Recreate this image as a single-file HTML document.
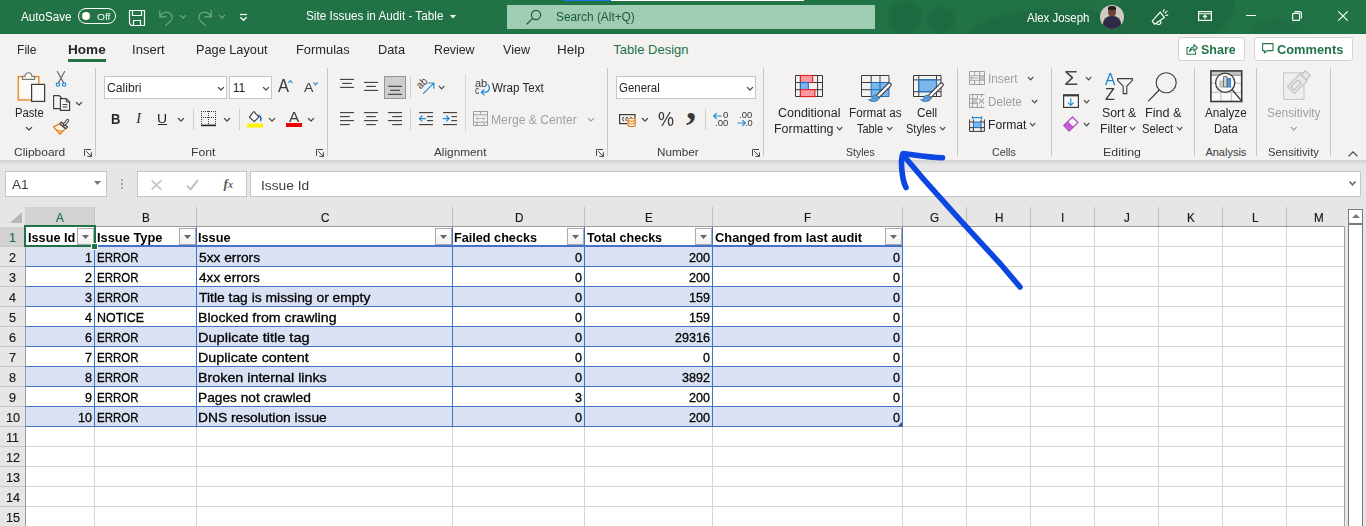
<!DOCTYPE html>
<html lang="en"><head><meta charset="utf-8"><title>Site Issues in Audit - Table - Excel</title>
<style>
html,body{margin:0;padding:0}
body{width:1366px;height:526px;overflow:hidden;position:relative;background:#e6e6e6;font-family:"Liberation Sans",sans-serif}
.b{position:absolute;box-sizing:border-box;display:block}
.t{position:absolute;white-space:nowrap;transform-origin:0 0;line-height:1;display:block}
svg{overflow:visible}
</style></head>
<body>
<div class="b" style="left:0px;top:0px;width:1366px;height:34px;background:#217346;overflow:hidden"><div class="b" style="left:888px;top:1px;width:34px;height:34px;border-radius:50%;background:#1e6a40;filter:blur(1.5px)"></div><div class="b" style="left:927px;top:6px;width:28px;height:28px;border-radius:50%;background:#1e6a40;filter:blur(1.5px)"></div><div class="b" style="left:965px;top:9px;width:190px;height:64px;border-radius:50%;background:#1e6a40;filter:blur(1.5px)"></div><div class="b" style="left:1120px;top:-20px;width:115px;height:60px;border-radius:0 0 40px 20px;background:#1e6a40;filter:blur(1.5px)"></div><div class="b" style="left:1040px;top:-30px;width:60px;height:44px;border-radius:50%;background:#206f43;filter:blur(2px)"></div><div class="b" style="left:1250px;top:18px;width:50px;height:40px;border-radius:50%;background:#1f6d42;filter:blur(2px)"></div></div>
<div class="b" style="left:563px;top:0px;width:48px;height:1px;background:#1a73e8"></div>
<div class="b" style="left:611px;top:0px;width:193px;height:1px;background:#fff"></div>
<span class="t" style="left:21.00px;top:10.82px;font-size:12.5px;color:#fff;transform:scaleX(0.9313);">AutoSave</span>
<div class="b" style="left:78px;top:8px;width:38px;height:16.4px;border:1px solid #fff;border-radius:9px"></div>
<div class="b" style="left:81.7px;top:12px;width:8.2px;height:8.2px;background:#fff;border-radius:50%"></div>
<span class="t" style="left:96.73px;top:11.86px;font-size:9.5px;color:#fff;transform:scaleX(1.0722);">Off</span>
<span class="t" style="left:306.47px;top:10.32px;font-size:12.5px;color:#fff;transform:scaleX(0.9387);">Site Issues in Audit - Table</span>
<svg class="b" style="left:450px;top:15px;" width="6" height="4" viewBox="0 0 6 4"><path d="M0 0h6l-3 3.5z" fill="#fff"/></svg>
<div class="b" style="left:507px;top:5px;width:368px;height:24px;background:#9fcdb3"></div>
<span class="t" style="left:556.47px;top:10.82px;font-size:12.5px;color:#1c5a38;transform:scaleX(0.9492);">Search (Alt+Q)</span>
<span class="t" style="left:1027.00px;top:11.62px;font-size:12.5px;color:#fff;transform:scaleX(0.9166);">Alex Joseph</span>
<div class="b" style="left:0px;top:34px;width:1366px;height:126px;background:#f3f2f1"></div>
<div class="b" style="left:0px;top:160px;width:1366px;height:5px;background:linear-gradient(#d2d2d2,#e6e6e6)"></div>
<span class="t" style="left:16.61px;top:43.40px;font-size:13px;color:#262626;transform:scaleX(0.9290);">File</span>
<span class="t" style="left:67.75px;top:43.40px;font-size:13px;color:#262626;font-weight:700;transform:scaleX(1.0437);">Home</span>
<div class="b" style="left:68px;top:58.5px;width:38px;height:3px;background:#217346"></div>
<span class="t" style="left:132.41px;top:43.40px;font-size:13px;color:#262626;transform:scaleX(1.0048);">Insert</span>
<span class="t" style="left:195.56px;top:43.40px;font-size:13px;color:#262626;transform:scaleX(0.9795);">Page Layout</span>
<span class="t" style="left:296.35px;top:43.40px;font-size:13px;color:#262626;transform:scaleX(0.9907);">Formulas</span>
<span class="t" style="left:378.36px;top:43.40px;font-size:13px;color:#262626;transform:scaleX(0.9835);">Data</span>
<span class="t" style="left:434.39px;top:43.40px;font-size:13px;color:#262626;transform:scaleX(0.9514);">Review</span>
<span class="t" style="left:503.00px;top:43.40px;font-size:13px;color:#262626;transform:scaleX(0.9643);">View</span>
<span class="t" style="left:557.30px;top:43.40px;font-size:13px;color:#262626;transform:scaleX(1.0348);">Help</span>
<span class="t" style="left:613.35px;top:43.40px;font-size:13px;color:#217346;">Table Design</span>
<div class="b" style="left:1178px;top:37px;width:67px;height:24px;background:#fff;border:1px solid #d6d4d2;border-radius:3px"></div>
<span class="t" style="left:1201.24px;top:43.40px;font-size:13px;color:#217346;font-weight:700;transform:scaleX(0.9628);">Share</span>
<div class="b" style="left:1254px;top:37px;width:99px;height:24px;background:#fff;border:1px solid #d6d4d2;border-radius:3px"></div>
<span class="t" style="left:1277.11px;top:43.40px;font-size:13px;color:#217346;font-weight:700;transform:scaleX(0.9881);">Comments</span>
<div class="b" style="left:95px;top:68px;width:1px;height:88px;background:#c8c6c4"></div>
<div class="b" style="left:327px;top:68px;width:1px;height:88px;background:#c8c6c4"></div>
<div class="b" style="left:607px;top:68px;width:1px;height:88px;background:#c8c6c4"></div>
<div class="b" style="left:763px;top:68px;width:1px;height:88px;background:#c8c6c4"></div>
<div class="b" style="left:957px;top:68px;width:1px;height:88px;background:#c8c6c4"></div>
<div class="b" style="left:1051px;top:68px;width:1px;height:88px;background:#c8c6c4"></div>
<div class="b" style="left:1194px;top:68px;width:1px;height:88px;background:#c8c6c4"></div>
<div class="b" style="left:1256px;top:68px;width:1px;height:88px;background:#c8c6c4"></div>
<div class="b" style="left:1330px;top:68px;width:1px;height:88px;background:#c8c6c4"></div>
<div class="b" style="left:465px;top:74px;width:1px;height:58px;background:#d8d6d4"></div>
<div class="b" style="left:410px;top:77px;width:1px;height:21px;background:#d0cecc"></div>
<div class="b" style="left:410px;top:109px;width:1px;height:21px;background:#d0cecc"></div>
<div class="b" style="left:193px;top:109px;width:1px;height:21px;background:#d0cecc"></div>
<div class="b" style="left:239px;top:109px;width:1px;height:21px;background:#d0cecc"></div>
<div class="b" style="left:705px;top:109px;width:1px;height:21px;background:#d0cecc"></div>
<span class="t" style="left:13.86px;top:147.09px;font-size:11px;color:#3b3a39;transform:scaleX(1.0884);">Clipboard</span>
<span class="t" style="left:190.63px;top:147.09px;font-size:11px;color:#3b3a39;transform:scaleX(1.1110);">Font</span>
<span class="t" style="left:433.60px;top:147.09px;font-size:11px;color:#3b3a39;transform:scaleX(1.0721);">Alignment</span>
<span class="t" style="left:656.67px;top:147.09px;font-size:11px;color:#3b3a39;transform:scaleX(1.0614);">Number</span>
<span class="t" style="left:846.12px;top:147.09px;font-size:11px;color:#3b3a39;transform:scaleX(0.9566);">Styles</span>
<span class="t" style="left:992.11px;top:147.09px;font-size:11px;color:#3b3a39;transform:scaleX(0.9761);">Cells</span>
<span class="t" style="left:1103.41px;top:147.09px;font-size:11px;color:#3b3a39;transform:scaleX(1.1290);">Editing</span>
<span class="t" style="left:1205.40px;top:147.09px;font-size:11px;color:#3b3a39;">Analysis</span>
<span class="t" style="left:1268.09px;top:147.09px;font-size:11px;color:#3b3a39;transform:scaleX(1.0286);">Sensitivity</span>
<span class="t" style="left:14.72px;top:106.84px;font-size:12px;color:#262626;transform:scaleX(0.9368);">Paste</span>
<div class="b" style="left:104px;top:76px;width:123px;height:23px;background:#fff;border:1px solid #c8c6c4"></div>
<span class="t" style="left:107.43px;top:82.24px;font-size:12px;color:#262626;transform:scaleX(1.0115);">Calibri</span>
<div class="b" style="left:229px;top:76px;width:43px;height:23px;background:#fff;border:1px solid #c8c6c4"></div>
<span class="t" style="left:232.72px;top:82.24px;font-size:12px;color:#262626;">11</span>
<span class="t" style="left:110.79px;top:111.55px;font-size:14px;color:#262626;font-weight:700;transform:scaleX(0.9275);">B</span>
<span class="t" style="left:136.2px;top:111.6px;font-size:14px;font-style:italic;color:#262626;font-family:'Liberation Serif',serif">I</span>
<span class="t" style="left:157.42px;top:111.90px;font-size:13px;color:#262626;transform:scaleX(1.0756);">U</span>
<div class="b" style="left:158px;top:124px;width:9px;height:1px;background:#262626"></div>
<span class="t" style="left:492.40px;top:82.24px;font-size:12px;color:#262626;transform:scaleX(0.9645);">Wrap Text</span>
<span class="t" style="left:491.45px;top:114.24px;font-size:12px;color:#a19f9d;transform:scaleX(1.0124);">Merge &amp; Center</span>
<div class="b" style="left:616px;top:76px;width:140px;height:23px;background:#fff;border:1px solid #c8c6c4"></div>
<span class="t" style="left:619.06px;top:82.24px;font-size:12px;color:#262626;transform:scaleX(0.9537);">General</span>
<span class="t" style="left:657.96px;top:109.89px;font-size:19.5px;color:#3b3a39;transform:scaleX(0.9250);">%</span>
<span class="t" style="left:778.02px;top:107.24px;font-size:12px;color:#262626;transform:scaleX(1.0394);">Conditional</span>
<span class="t" style="left:773.63px;top:123.24px;font-size:12px;color:#262626;transform:scaleX(1.0379);">Formatting</span>
<span class="t" style="left:848.69px;top:107.24px;font-size:12px;color:#262626;transform:scaleX(0.9756);">Format as</span>
<span class="t" style="left:857.37px;top:123.24px;font-size:12px;color:#262626;transform:scaleX(0.9092);">Table</span>
<span class="t" style="left:917.05px;top:107.24px;font-size:12px;color:#262626;transform:scaleX(0.9735);">Cell</span>
<span class="t" style="left:905.94px;top:123.24px;font-size:12px;color:#262626;transform:scaleX(0.9179);">Styles</span>
<span class="t" style="left:987.55px;top:73.24px;font-size:12px;color:#a19f9d;transform:scaleX(0.9835);">Insert</span>
<span class="t" style="left:987.69px;top:96.24px;font-size:12px;color:#a19f9d;transform:scaleX(0.9744);">Delete</span>
<span class="t" style="left:987.65px;top:119.24px;font-size:12px;color:#262626;transform:scaleX(1.0108);">Format</span>
<span class="t" style="left:1101.89px;top:107.24px;font-size:12px;color:#262626;transform:scaleX(1.0279);">Sort &amp;</span>
<span class="t" style="left:1099.65px;top:123.24px;font-size:12px;color:#262626;transform:scaleX(1.0093);">Filter</span>
<span class="t" style="left:1144.61px;top:107.24px;font-size:12px;color:#262626;transform:scaleX(1.0528);">Find &amp;</span>
<span class="t" style="left:1141.93px;top:123.24px;font-size:12px;color:#262626;transform:scaleX(0.9344);">Select</span>
<span class="t" style="left:1205.40px;top:107.24px;font-size:12px;color:#262626;transform:scaleX(0.9766);">Analyze</span>
<span class="t" style="left:1213.73px;top:123.24px;font-size:12px;color:#262626;transform:scaleX(0.9330);">Data</span>
<span class="t" style="left:1266.50px;top:107.24px;font-size:12px;color:#a19f9d;transform:scaleX(0.9907);">Sensitivity</span>
<div class="b" style="left:384px;top:76px;width:22px;height:23px;background:#d0cecc;border:1px solid #979593"></div>
<div class="b" style="left:5px;top:171px;width:102px;height:26px;background:#fff;border:1px solid #c6c6c6"></div>
<span class="t" style="left:12.10px;top:178.26px;font-size:13.4px;color:#3c3c3c;transform:scaleX(1.0095);">A1</span>
<div class="b" style="left:137px;top:171px;width:110px;height:26px;background:#fff;border:1px solid #c6c6c6"></div>
<div class="b" style="left:250px;top:171px;width:1111px;height:26px;background:#fff;border:1px solid #c6c6c6"></div>
<span class="t" style="left:261.24px;top:178.50px;font-size:13px;color:#3c3c3c;transform:scaleX(1.0582);">Issue Id</span>
<svg class="b" style="left:129px;top:10px;" width="16" height="16" viewBox="0 0 16 16"><path d="M0.5 0.5H15.5V15.5H2.5L0.5 13.5Z M3.5 0.5V5.5H12.5V0.5 M4.5 15.5V10.5H11.5V15.5" fill="none" stroke="#fff" stroke-width="1.2" stroke-linejoin="round"/></svg>
<svg class="b" style="left:159px;top:10px;" width="14" height="16" viewBox="0 0 14 16"><path d="M0.8 0.5V6.8H7 M1.2 6.4C3 2.8 7 1.2 10.2 2.8C13.6 4.6 14 8.6 11.4 11.2L6.5 15.6" fill="none" stroke="#6ea687" stroke-width="1.2" stroke-linecap="round" stroke-linejoin="round"/></svg>
<svg class="b" style="left:180px;top:15px;" width="6" height="4" viewBox="0 0 6 4"><path d="M0.3 0.3 L3.0 3 L5.7 0.3" fill="none" stroke="#6ea687" stroke-width="1.2" stroke-linecap="round" stroke-linejoin="round"/></svg>
<svg class="b" style="left:198px;top:10px;" width="14" height="16" viewBox="0 0 14 16"><path d="M13.2 0.5V6.8H7 M12.8 6.4C11 2.8 7 1.2 3.8 2.8C0.4 4.6 0 8.6 2.6 11.2L7.5 15.6" fill="none" stroke="#6ea687" stroke-width="1.2" stroke-linecap="round" stroke-linejoin="round"/></svg>
<svg class="b" style="left:219px;top:15px;" width="6" height="4" viewBox="0 0 6 4"><path d="M0.3 0.3 L3.0 3 L5.7 0.3" fill="none" stroke="#6ea687" stroke-width="1.2" stroke-linecap="round" stroke-linejoin="round"/></svg>
<svg class="b" style="left:240px;top:13.5px;" width="7" height="7" viewBox="0 0 7 7"><path d="M0 0.5H7" stroke="#fff" stroke-width="1.2"/><path d="M0.4 3.3L3.5 6.3L6.6 3.3" fill="none" stroke="#fff" stroke-width="1.3"/></svg>
<svg class="b" style="left:525.5px;top:9px;" width="16" height="16" viewBox="0 0 16 16"><circle cx="10" cy="6" r="4.6" fill="none" stroke="#1c5a38" stroke-width="1.2"/><path d="M6.6 9.4L1 15" stroke="#1c5a38" stroke-width="1.2" stroke-linecap="round"/></svg>
<div class="b" style="left:1100px;top:4.5px;width:24px;height:24px;border-radius:50%;overflow:hidden;background:#cfcac2"><div class="b" style="left:7.5px;top:2px;width:8px;height:10px;border-radius:50%;background:#6b4636"></div><div class="b" style="left:7.5px;top:1px;width:8px;height:4px;border-radius:50% 50% 0 0;background:#221c1a"></div><div class="b" style="left:2.5px;top:11px;width:18px;height:18px;border-radius:45% 45% 0 0;background:#2c2a45"></div></div>
<svg class="b" style="left:1151px;top:8.5px;" width="17" height="17" viewBox="0 0 17 17"><path d="M9.2 3.2L13.4 8.6L3.6 15.2L1.2 12.2Z" fill="none" stroke="#fff" stroke-width="1.2" stroke-linejoin="round"/><path d="M5.5 14.2A2.2 2.2 0 0 0 9.6 12" fill="none" stroke="#fff" stroke-width="1.1"/><path d="M12.2 2.6L13 0.6M14 4L16 2.2M14.8 6.4L16.8 6" stroke="#fff" stroke-width="1.1" stroke-linecap="round"/></svg>
<svg class="b" style="left:1197.5px;top:11px;" width="14" height="10" viewBox="0 0 14 10"><rect x="0.6" y="0.6" width="12.8" height="8.8" fill="none" stroke="#fff" stroke-width="1.2"/><path d="M0.6 2.8H13.4" stroke="#fff" stroke-width="1"/><path d="M7 8V4.4M5 6.2L7 4.2L9 6.2" fill="none" stroke="#fff" stroke-width="1.1"/></svg>
<div class="b" style="left:1246px;top:14.6px;width:10px;height:1.2px;background:#fff"></div>
<svg class="b" style="left:1292px;top:11px;" width="10" height="10" viewBox="0 0 10 10"><rect x="0.6" y="2.4" width="7" height="7" rx="1" fill="none" stroke="#fff" stroke-width="1.1"/><path d="M2.6 0.6H7.4A2 2 0 0 1 9.4 2.6V7.4" fill="none" stroke="#fff" stroke-width="1.1"/></svg>
<svg class="b" style="left:1338px;top:11px;" width="10" height="10" viewBox="0 0 10 10"><path d="M0.3 0.3L9.7 9.7M9.7 0.3L0.3 9.7" stroke="#fff" stroke-width="1.2"/></svg>
<svg class="b" style="left:1185.5px;top:43px;" width="12" height="12" viewBox="0 0 12 12"><path d="M3 4.5H1V11.2H9.6V8.4" fill="none" stroke="#217346" stroke-width="1.1" stroke-linejoin="round"/><path d="M3.6 8.6C4 5.6 6 4 8 4V1.6L11.4 4.8L8 8V5.8C6.4 5.8 4.8 6.6 3.6 8.6Z" fill="none" stroke="#217346" stroke-width="1.1" stroke-linejoin="round"/></svg>
<svg class="b" style="left:1262px;top:43px;" width="12" height="11" viewBox="0 0 12 11"><path d="M0.6 0.6H11V7.6H5L2.4 10V7.6H0.6Z" fill="none" stroke="#217346" stroke-width="1.1" stroke-linejoin="round"/></svg>
<svg class="b" style="left:17px;top:71px;" width="30" height="32" viewBox="0 0 30 32"><rect x="1.2" y="5.6" width="20.6" height="23.4" fill="#fdf3d6" stroke="#e07c1a" stroke-width="1.2"/><rect x="3.4" y="7.6" width="16.4" height="19.6" fill="#fbfaf8"/><path d="M5.4 8.4V5.4H8.2C8.2 0.6 14.8 0.6 14.8 5.4H17.6V8.4Z" fill="#f8f7f5" stroke="#797775" stroke-width="1.1" stroke-linejoin="round"/><rect x="14.6" y="13.4" width="13" height="17" fill="#fafafa" stroke="#3b3a39" stroke-width="1.2"/></svg>
<svg class="b" style="left:25.7px;top:127px;" width="6" height="4" viewBox="0 0 6 4"><path d="M0.3 0.3 L3.0 3 L5.7 0.3" fill="none" stroke="#444" stroke-width="1.2" stroke-linecap="round" stroke-linejoin="round"/></svg>
<svg class="b" style="left:55px;top:71px;" width="12" height="16" viewBox="0 0 12 16"><path d="M2.4 0.6L8.4 11.4M9.6 0.6L3.6 11.4" stroke="#605e5c" stroke-width="1.1" stroke-linecap="round"/><circle cx="2.9" cy="13.6" r="1.7" fill="none" stroke="#1e8ad6" stroke-width="1.1"/><circle cx="9.1" cy="13.6" r="1.7" fill="none" stroke="#1e8ad6" stroke-width="1.1"/></svg>
<svg class="b" style="left:52.5px;top:95px;" width="18" height="16" viewBox="0 0 18 16"><path d="M7.4 13.6H0.6V0.6H6.2L8.6 3" fill="none" stroke="#3b3a39" stroke-width="1.1" stroke-linejoin="round"/><path d="M7.4 3.6H13.4L16.6 6.8V15.4H7.4Z" fill="#fafafa" stroke="#3b3a39" stroke-width="1.1" stroke-linejoin="round"/><path d="M13.2 3.8V7H16.4" fill="none" stroke="#3b3a39" stroke-width="1"/><path d="M9.6 9.6H14.4M9.6 12H14.4" stroke="#3b3a39" stroke-width="1"/></svg>
<svg class="b" style="left:76px;top:102.2px;" width="6" height="4" viewBox="0 0 6 4"><path d="M0.3 0.3 L3.0 3 L5.7 0.3" fill="none" stroke="#444" stroke-width="1.2" stroke-linecap="round" stroke-linejoin="round"/></svg>
<svg class="b" style="left:53px;top:118.5px;" width="17" height="16" viewBox="0 0 17 16"><path d="M6.6 4.9L0.5 7.9L7 15.3L12.3 9.7Z" fill="#fdf6ec" stroke="#e07c1a" stroke-width="1.2" stroke-linejoin="round"/><path d="M2.4 9.8L7 15L10.6 11.4C7.6 12.4 5 11.6 2.4 9.8Z" fill="#f7b55c" stroke="#e07c1a" stroke-width="0.6"/><path d="M8.3 3L14.5 8L13 9.7L6.9 4.7Z" fill="#f3f2f1" stroke="#3b3a39" stroke-width="1.1" stroke-linejoin="round"/><path d="M11.4 5.4L14.6 1.5" stroke="#3b3a39" stroke-width="3.2" stroke-linecap="round"/><path d="M11.6 5.2L14.6 1.5" stroke="#f3f2f1" stroke-width="1.2" stroke-linecap="round"/></svg>
<svg class="b" style="left:84px;top:148.5px;" width="8" height="8" viewBox="0 0 8 8"><path d="M0.5 6.8V0.5H7M2.2 2.2L7.3 7.3M7.4 3.4V7.4H3.4" fill="none" stroke="#484644" stroke-width="1"/></svg>
<svg class="b" style="left:217.6px;top:86.8px;" width="6" height="4" viewBox="0 0 6 4"><path d="M0.3 0.3 L3.0 3 L5.7 0.3" fill="none" stroke="#444" stroke-width="1.2" stroke-linecap="round" stroke-linejoin="round"/></svg>
<svg class="b" style="left:262.6px;top:86.8px;" width="6" height="4" viewBox="0 0 6 4"><path d="M0.3 0.3 L3.0 3 L5.7 0.3" fill="none" stroke="#444" stroke-width="1.2" stroke-linecap="round" stroke-linejoin="round"/></svg>
<span class="t" style="left:278.00px;top:77.16px;font-size:18px;color:#3b3a39;transform:scaleX(0.9167);">A</span>
<svg class="b" style="left:288.4px;top:79.6px;" width="5" height="3.4" viewBox="0 0 5 3.4"><path d="M0.4 3L2.5 0.6L4.6 3" fill="none" stroke="#1e8ad6" stroke-width="1.1"/></svg>
<span class="t" style="left:303.60px;top:80.97px;font-size:13.5px;color:#3b3a39;transform:scaleX(1.0444);">A</span>
<svg class="b" style="left:312.8px;top:81.6px;" width="5" height="3.4" viewBox="0 0 5 3.4"><path d="M0.4 0.4L2.5 2.8L4.6 0.4" fill="none" stroke="#1e8ad6" stroke-width="1.1"/></svg>
<svg class="b" style="left:177.5px;top:118px;" width="6" height="4" viewBox="0 0 6 4"><path d="M0.3 0.3 L3.0 3 L5.7 0.3" fill="none" stroke="#444" stroke-width="1.2" stroke-linecap="round" stroke-linejoin="round"/></svg>
<svg class="b" style="left:201px;top:111px;" width="15" height="15.5" viewBox="0 0 15 15.5"><path d="M0 0.5H15M0 6.5H15M0.5 0V13M14.5 0V13M7.5 0V13" fill="none" stroke="#3b3a39" stroke-width="1" stroke-dasharray="1 1"/><path d="M0 14.4H15" stroke="#201f1e" stroke-width="1.6"/></svg>
<svg class="b" style="left:223.5px;top:118px;" width="6" height="4" viewBox="0 0 6 4"><path d="M0.3 0.3 L3.0 3 L5.7 0.3" fill="none" stroke="#444" stroke-width="1.2" stroke-linecap="round" stroke-linejoin="round"/></svg>
<svg class="b" style="left:247px;top:110.5px;" width="16" height="16.5" viewBox="0 0 16 16.5"><path d="M6.2 1.2L2.4 6.2L7.2 10.6L12 5.8L7.4 1.4" fill="#fafafa" stroke="#3b3a39" stroke-width="1.1" stroke-linejoin="round"/><path d="M6.4 0.6C7.4 0 8.4 0.8 7.8 2" fill="none" stroke="#3b3a39" stroke-width="1"/><path d="M12 4.4C13.6 5.4 14.4 7.4 13.6 9.6" fill="none" stroke="#1565c0" stroke-width="1.5" stroke-linecap="round"/><rect x="0" y="12.6" width="16" height="3.9" fill="#fff100"/></svg>
<svg class="b" style="left:269.4px;top:118px;" width="6" height="4" viewBox="0 0 6 4"><path d="M0.3 0.3 L3.0 3 L5.7 0.3" fill="none" stroke="#444" stroke-width="1.2" stroke-linecap="round" stroke-linejoin="round"/></svg>
<span class="t" style="left:289.40px;top:110.05px;font-size:14px;color:#3b3a39;transform:scaleX(1.0953);">A</span>
<div class="b" style="left:286px;top:123.2px;width:16px;height:3.9px;background:#f00000"></div>
<svg class="b" style="left:308.4px;top:118px;" width="6" height="4" viewBox="0 0 6 4"><path d="M0.3 0.3 L3.0 3 L5.7 0.3" fill="none" stroke="#444" stroke-width="1.2" stroke-linecap="round" stroke-linejoin="round"/></svg>
<svg class="b" style="left:316px;top:148.5px;" width="8" height="8" viewBox="0 0 8 8"><path d="M0.5 6.8V0.5H7M2.2 2.2L7.3 7.3M7.4 3.4V7.4H3.4" fill="none" stroke="#484644" stroke-width="1"/></svg>
<svg class="b" style="left:0;top:0" width="1366" height="160" viewBox="0 0 1366 160"><path d="M340 79.4H354" stroke="#3b3a39" stroke-width="1.1"/><path d="M342.2 83.4H351.8" stroke="#3b3a39" stroke-width="1.1"/><path d="M340 87.4H354" stroke="#3b3a39" stroke-width="1.1"/><path d="M364 82.4H378" stroke="#3b3a39" stroke-width="1.1"/><path d="M366.2 86.4H375.8" stroke="#3b3a39" stroke-width="1.1"/><path d="M364 90.4H378" stroke="#3b3a39" stroke-width="1.1"/><path d="M388 86.3H402" stroke="#3b3a39" stroke-width="1.1"/><path d="M390.2 90.3H399.8" stroke="#3b3a39" stroke-width="1.1"/><path d="M388 94.3H402" stroke="#3b3a39" stroke-width="1.1"/><path d="M340 112.6H354" stroke="#3b3a39" stroke-width="1.1"/><path d="M364 112.6H378" stroke="#3b3a39" stroke-width="1.1"/><path d="M388 112.6H402" stroke="#3b3a39" stroke-width="1.1"/><path d="M340 116.6H349.7" stroke="#3b3a39" stroke-width="1.1"/><path d="M366.2 116.6H375.8" stroke="#3b3a39" stroke-width="1.1"/><path d="M392.2 116.6H402" stroke="#3b3a39" stroke-width="1.1"/><path d="M340 120.6H354" stroke="#3b3a39" stroke-width="1.1"/><path d="M364 120.6H378" stroke="#3b3a39" stroke-width="1.1"/><path d="M388 120.6H402" stroke="#3b3a39" stroke-width="1.1"/><path d="M340 124.6H349.7" stroke="#3b3a39" stroke-width="1.1"/><path d="M366.2 124.6H375.8" stroke="#3b3a39" stroke-width="1.1"/><path d="M392.2 124.6H402" stroke="#3b3a39" stroke-width="1.1"/><path d="M419 112.6H433" stroke="#3b3a39" stroke-width="1.1"/><path d="M427 116.6H433" stroke="#3b3a39" stroke-width="1.1"/><path d="M427 120.6H433" stroke="#3b3a39" stroke-width="1.1"/><path d="M419 124.6H433" stroke="#3b3a39" stroke-width="1.1"/><path d="M425.4 118.6H419.6M422 116L419.4 118.6L422 121.2" fill="none" stroke="#1e8ad6" stroke-width="1.2" stroke-linejoin="round" stroke-linecap="round"/><path d="M443 112.6H457" stroke="#3b3a39" stroke-width="1.1"/><path d="M451.3 116.6H457" stroke="#3b3a39" stroke-width="1.1"/><path d="M451.3 120.6H457" stroke="#3b3a39" stroke-width="1.1"/><path d="M443 124.6H457" stroke="#3b3a39" stroke-width="1.1"/><path d="M443.2 118.6H449M446.6 116L449.2 118.6L446.6 121.2" fill="none" stroke="#1e8ad6" stroke-width="1.2" stroke-linejoin="round" stroke-linecap="round"/><path d="M423.4 93.4L433.6 83.4M428.8 83H433.9V88.2" fill="none" stroke="#1e8ad6" stroke-width="1.2" stroke-linejoin="round" stroke-linecap="round"/><path d="M488 84.6C490.4 87 489.6 91.8 485.6 92.2H481.6M484 89.6L481.2 92.2L484 94.8" fill="none" stroke="#1e8ad6" stroke-width="1.2" stroke-linejoin="round" stroke-linecap="round"/><path d="M473.5 111.5H487.5V125.5H473.5Z M473.5 114.8H487.5M473.5 122.2H487.5M480.5 111.5V114.8M477 122.2V125.5M484 122.2V125.5" fill="none" stroke="#a19f9d" stroke-width="1"/><path d="M476 118.5H485M477.8 116.8L476 118.5L477.8 120.2M483.2 116.8L485 118.5L483.2 120.2" fill="none" stroke="#b8b6b4" stroke-width="1"/></svg>
<span class="t" style="left:421.5px;top:79.5px;font-size:11px;color:#3b3a39;transform:rotate(-45deg) scaleX(0.88);transform-origin:0 100%">ab</span>
<svg class="b" style="left:439px;top:85.8px;" width="5.2" height="3.8" viewBox="0 0 5.2 3.8"><path d="M0.3 0.3 L2.6 2.8 L4.9 0.3" fill="none" stroke="#444" stroke-width="1.2" stroke-linecap="round" stroke-linejoin="round"/></svg>
<span class="t" style="left:475.39px;top:78.94px;font-size:10px;color:#3b3a39;transform:scaleX(1.0988);">ab</span>
<span class="t" style="left:475.47px;top:85.94px;font-size:10px;color:#3b3a39;transform:scaleX(0.8686);">c</span>
<svg class="b" style="left:587.6px;top:118px;" width="6" height="4" viewBox="0 0 6 4"><path d="M0.3 0.3 L3.0 3 L5.7 0.3" fill="none" stroke="#a19f9d" stroke-width="1.2" stroke-linecap="round" stroke-linejoin="round"/></svg>
<svg class="b" style="left:596px;top:148.5px;" width="8" height="8" viewBox="0 0 8 8"><path d="M0.5 6.8V0.5H7M2.2 2.2L7.3 7.3M7.4 3.4V7.4H3.4" fill="none" stroke="#484644" stroke-width="1"/></svg>
<svg class="b" style="left:746.6px;top:86.8px;" width="6" height="4" viewBox="0 0 6 4"><path d="M0.3 0.3 L3.0 3 L5.7 0.3" fill="none" stroke="#444" stroke-width="1.2" stroke-linecap="round" stroke-linejoin="round"/></svg>
<svg class="b" style="left:618.5px;top:114px;" width="17" height="13" viewBox="0 0 17 13"><rect x="0.6" y="0.6" width="15.4" height="9" fill="none" stroke="#3b3a39" stroke-width="1.2"/><path d="M5 3.2C3.2 3.2 3.2 7 5 7M7 7V4.2C7 3 9 3 9 4.2M11.2 3.2C13 3.2 13 5 13 7" fill="none" stroke="#3b3a39" stroke-width="1"/><rect x="8.2" y="4.4" width="8.6" height="8.6" fill="#f3f2f1"/><path d="M9 5.8V11.2C9 13 16.2 13 16.2 11.2V5.8" fill="#fdf3e6" stroke="#e07c1a" stroke-width="1.1"/><ellipse cx="12.6" cy="5.8" rx="3.6" ry="1.5" fill="#fdf3e6" stroke="#e07c1a" stroke-width="1.1"/><path d="M9 8.4C9 10.2 16.2 10.2 16.2 8.4" fill="none" stroke="#e07c1a" stroke-width="1"/></svg>
<svg class="b" style="left:641.8px;top:118px;" width="6" height="4" viewBox="0 0 6 4"><path d="M0.3 0.3 L3.0 3 L5.7 0.3" fill="none" stroke="#444" stroke-width="1.2" stroke-linecap="round" stroke-linejoin="round"/></svg>
<span class="t" style="left:686px;top:85.4px;font-size:41px;font-weight:700;color:#3b3a39;font-family:'Liberation Serif',serif">,</span>
<svg class="b" style="left:713px;top:112.6px;" width="9" height="6" viewBox="0 0 9 6"><path d="M8.2 3H0.8M3.4 0.4L0.7 3L3.4 5.6" fill="none" stroke="#1e8ad6" stroke-width="1.2" stroke-linejoin="round" stroke-linecap="round"/></svg>
<span class="t" style="left:722.94px;top:110.60px;font-size:8.5px;color:#3b3a39;transform:scaleX(1.1394);">0</span>
<span class="t" style="left:714.95px;top:119.00px;font-size:8.5px;color:#3b3a39;transform:scaleX(1.1349);">.00</span>
<span class="t" style="left:739.16px;top:110.60px;font-size:8.5px;color:#3b3a39;transform:scaleX(1.1163);">.00</span>
<svg class="b" style="left:737px;top:119.8px;" width="9" height="6" viewBox="0 0 9 6"><path d="M0.8 3H8.2M5.6 0.4L8.3 3L5.6 5.6" fill="none" stroke="#1e8ad6" stroke-width="1.2" stroke-linejoin="round" stroke-linecap="round"/></svg>
<span class="t" style="left:744.58px;top:119.00px;font-size:8.5px;color:#3b3a39;transform:scaleX(1.0887);">.0</span>
<svg class="b" style="left:752px;top:148.5px;" width="8" height="8" viewBox="0 0 8 8"><path d="M0.5 6.8V0.5H7M2.2 2.2L7.3 7.3M7.4 3.4V7.4H3.4" fill="none" stroke="#484644" stroke-width="1"/></svg>
<svg class="b" style="left:795px;top:75px;" width="28" height="22" viewBox="0 0 28 22"><path d="M0.5 0.5H27.5V21.5H0.5Z M0.5 7.5H27.5M0.5 14.7H27.5 M5.4 0.5V21.5 M22.6 0.5V21.5" fill="none" stroke="#3b3a39" stroke-width="1"/><rect x="5.4" y="0.5" width="12.3" height="7" fill="#ff9aa2" stroke="#e0201c" stroke-width="1.1"/><rect x="5.4" y="7.5" width="7.9" height="7.2" fill="#7db7ea" stroke="#1a6fc4" stroke-width="1.1"/><rect x="5.4" y="14.7" width="14.5" height="6.9" fill="#ff9aa2" stroke="#e0201c" stroke-width="1.1"/></svg>
<svg class="b" style="left:837px;top:127.2px;" width="5.2" height="3.8" viewBox="0 0 5.2 3.8"><path d="M0.3 0.3 L2.6 2.8 L4.9 0.3" fill="none" stroke="#444" stroke-width="1.2" stroke-linecap="round" stroke-linejoin="round"/></svg>
<svg class="b" style="left:860.5px;top:75px;" width="32" height="28" viewBox="0 0 32 28"><rect x="10.2" y="7.5" width="17.8" height="14" fill="#7db7ea"/><path d="M10.2 7.5H28M10.2 14.7H28M10.2 7.5V21.5M19 7.5V21.5M28 7.5V21.5M10.2 21.5H28" fill="none" stroke="#1a6fc4" stroke-width="1"/><path d="M0.5 0.5H28V7.5M0.5 0.5V21.5H10.2M0.5 7.5H10.2M0.5 14.7H10.2M10.2 0.5V7.5M19 0.5V7.5" fill="none" stroke="#3b3a39" stroke-width="1"/><path d="M29.6 8.4C30.6 9.2 30.4 10.2 29.6 11.2L18 22.6L15.4 20.4L27 8.6C27.8 7.8 28.8 7.8 29.6 8.4Z" fill="#fafafa" stroke="#3b3a39" stroke-width="1.1" stroke-linejoin="round"/><path d="M15 20.2C12 19.6 10.6 22 10.8 23.6C10 24.8 8.4 25 7.4 24.6C10 27.6 17.6 27.2 18.2 23Z" fill="#5b9bd5" stroke="#2e75b6" stroke-width="0.8" stroke-linejoin="round"/></svg>
<svg class="b" style="left:887px;top:127.2px;" width="5.2" height="3.8" viewBox="0 0 5.2 3.8"><path d="M0.3 0.3 L2.6 2.8 L4.9 0.3" fill="none" stroke="#444" stroke-width="1.2" stroke-linecap="round" stroke-linejoin="round"/></svg>
<svg class="b" style="left:912.6px;top:75px;" width="32" height="28" viewBox="0 0 32 28"><path d="M0.5 0.5H28V21.5H0.5Z M0.5 4.9H28M0.5 16.7H28M5.8 0.5V21.5M23.5 0.5V21.5" fill="none" stroke="#3b3a39" stroke-width="1"/><rect x="5.8" y="4.9" width="17.7" height="11.8" fill="#7db7ea" stroke="#1a6fc4" stroke-width="1.2"/><path d="M29.6 8.4C30.6 9.2 30.4 10.2 29.6 11.2L18 22.6L15.4 20.4L27 8.6C27.8 7.8 28.8 7.8 29.6 8.4Z" fill="#fafafa" stroke="#3b3a39" stroke-width="1.1" stroke-linejoin="round"/><path d="M15 20.2C12 19.6 10.6 22 10.8 23.6C10 24.8 8.4 25 7.4 24.6C10 27.6 17.6 27.2 18.2 23Z" fill="#5b9bd5" stroke="#2e75b6" stroke-width="0.8" stroke-linejoin="round"/></svg>
<svg class="b" style="left:940px;top:127.2px;" width="5.2" height="3.8" viewBox="0 0 5.2 3.8"><path d="M0.3 0.3 L2.6 2.8 L4.9 0.3" fill="none" stroke="#444" stroke-width="1.2" stroke-linecap="round" stroke-linejoin="round"/></svg>
<svg class="b" style="left:969px;top:71px;" width="16" height="14" viewBox="0 0 16 14"><rect x="10.6" y="4.8" width="4.8" height="4.4" fill="#c8c6c4"/><path d="M0.5 0.5H15.5V13.5H0.5Z M0.5 4.8H15.5M0.5 9.2H15.5M5.6 0.5V4.8M10.6 0.5V13.5M5.6 9.2V13.5" fill="none" stroke="#a19f9d" stroke-width="1"/><rect x="1" y="5.3" width="9" height="3.4" fill="#f3f2f1"/><path d="M9.4 7H1.6M3.6 5.2L1.6 7L3.6 8.8" fill="none" stroke="#a19f9d" stroke-width="1"/></svg>
<svg class="b" style="left:1027.8px;top:77px;" width="5.2" height="3.8" viewBox="0 0 5.2 3.8"><path d="M0.3 0.3 L2.6 2.8 L4.9 0.3" fill="none" stroke="#444" stroke-width="1.2" stroke-linecap="round" stroke-linejoin="round"/></svg>
<svg class="b" style="left:969px;top:94px;" width="16" height="14" viewBox="0 0 16 14"><rect x="3.6" y="4.8" width="4.6" height="4.4" fill="#c8c6c4"/><path d="M0.5 0.5H15.5M0.5 13.5H15.5M0.5 0.5V13.5M0.5 4.8H9M0.5 9.2H9M3.6 0.5V13.5M8.4 0.5V4.8M8.4 9.2V13.5M12.4 0.5V3M12.4 11V13.5" fill="none" stroke="#a19f9d" stroke-width="1"/><path d="M10 4.6L15 9.6M15 4.6L10 9.6" fill="none" stroke="#a19f9d" stroke-width="1.1"/></svg>
<svg class="b" style="left:1031.7px;top:100px;" width="5.2" height="3.8" viewBox="0 0 5.2 3.8"><path d="M0.3 0.3 L2.6 2.8 L4.9 0.3" fill="none" stroke="#444" stroke-width="1.2" stroke-linecap="round" stroke-linejoin="round"/></svg>
<svg class="b" style="left:969px;top:116px;" width="16" height="16" viewBox="0 0 16 16"><path d="M3.4 1.6H12.6M3.4 0.2V3M12.6 0.2V3" fill="none" stroke="#1e8ad6" stroke-width="1.1"/><rect x="4.4" y="6" width="7.6" height="5.6" fill="#7db7ea" stroke="#1a6fc4" stroke-width="1"/><path d="M0.6 3.4V15.4H15.4V3.4M0.6 6H4.4M12 6H15.4M0.6 11.6H4.4M12 11.6H15.4M4.4 3.4V6M12 3.4V6M4.4 11.6V15.4M12 11.6V15.4" fill="none" stroke="#3b3a39" stroke-width="1"/></svg>
<svg class="b" style="left:1030px;top:123.2px;" width="5.2" height="3.8" viewBox="0 0 5.2 3.8"><path d="M0.3 0.3 L2.6 2.8 L4.9 0.3" fill="none" stroke="#444" stroke-width="1.2" stroke-linecap="round" stroke-linejoin="round"/></svg>
<span class="t" style="left:1064.02px;top:68.69px;font-size:19.5px;color:#484644;transform:scaleX(1.1830);">Σ</span>
<svg class="b" style="left:1085.8px;top:77px;" width="5.2" height="3.8" viewBox="0 0 5.2 3.8"><path d="M0.3 0.3 L2.6 2.8 L4.9 0.3" fill="none" stroke="#444" stroke-width="1.2" stroke-linecap="round" stroke-linejoin="round"/></svg>
<svg class="b" style="left:1063px;top:94px;" width="16" height="14" viewBox="0 0 16 14"><rect x="0.6" y="0.8" width="14.8" height="12.6" fill="#fafafa" stroke="#3b3a39" stroke-width="1.2"/><path d="M0.6 1.6H15.4" stroke="#3b3a39" stroke-width="1.6"/><path d="M7.8 4.6V11.2M5.2 8.8L7.8 11.4L10.4 8.8" fill="none" stroke="#1e8ad6" stroke-width="1.2" stroke-linejoin="round" stroke-linecap="round"/></svg>
<svg class="b" style="left:1083.8px;top:100px;" width="5.2" height="3.8" viewBox="0 0 5.2 3.8"><path d="M0.3 0.3 L2.6 2.8 L4.9 0.3" fill="none" stroke="#444" stroke-width="1.2" stroke-linecap="round" stroke-linejoin="round"/></svg>
<svg class="b" style="left:1063px;top:116px;" width="16" height="16" viewBox="0 0 16 16"><path d="M9.6 1L15 6.6L6 15L0.8 9.4Z" fill="#fafafa" stroke="#b146c2" stroke-width="1.2" stroke-linejoin="round"/><path d="M4.8 5.6L10.2 11.2L6 15L0.8 9.4Z" fill="#c55fd3" stroke="#b146c2" stroke-width="1" stroke-linejoin="round"/></svg>
<svg class="b" style="left:1083.8px;top:123.2px;" width="5.2" height="3.8" viewBox="0 0 5.2 3.8"><path d="M0.3 0.3 L2.6 2.8 L4.9 0.3" fill="none" stroke="#444" stroke-width="1.2" stroke-linecap="round" stroke-linejoin="round"/></svg>
<span class="t" style="left:1105.00px;top:71.03px;font-size:16.5px;color:#1e8ad6;transform:scaleX(0.9455);">A</span>
<span class="t" style="left:1104.71px;top:85.83px;font-size:16.5px;color:#3b3a39;transform:scaleX(0.9863);">Z</span>
<svg class="b" style="left:1117px;top:78.4px;" width="16" height="17" viewBox="0 0 16 17"><path d="M0.6 0.6H15.4V2.4L9.8 8.2V15.6H6.2V8.2L0.6 2.4Z" fill="none" stroke="#3b3a39" stroke-width="1.1" stroke-linejoin="round"/></svg>
<svg class="b" style="left:1130px;top:127.2px;" width="5.2" height="3.8" viewBox="0 0 5.2 3.8"><path d="M0.3 0.3 L2.6 2.8 L4.9 0.3" fill="none" stroke="#444" stroke-width="1.2" stroke-linecap="round" stroke-linejoin="round"/></svg>
<svg class="b" style="left:1148px;top:71.5px;" width="30" height="30" viewBox="0 0 30 30"><circle cx="18.2" cy="10.7" r="10" fill="none" stroke="#3b3a39" stroke-width="1.1"/><path d="M11.2 18L0.6 28.8" stroke="#3b3a39" stroke-width="1.2" stroke-linecap="round"/></svg>
<svg class="b" style="left:1177px;top:127.2px;" width="5.2" height="3.8" viewBox="0 0 5.2 3.8"><path d="M0.3 0.3 L2.6 2.8 L4.9 0.3" fill="none" stroke="#444" stroke-width="1.2" stroke-linecap="round" stroke-linejoin="round"/></svg>
<svg class="b" style="left:1209.5px;top:70px;" width="33" height="33" viewBox="0 0 33 33"><rect x="1" y="1" width="30.6" height="30.4" fill="#fafafa"/><rect x="1" y="1" width="30.6" height="4.4" fill="#c8c6c4"/><path d="M1 13.4H32M1 22.4H32M11 5.4V31.4M21.4 5.4V31.4" fill="none" stroke="#c8c6c4" stroke-width="1.2"/><path d="M1 5.2H32" stroke="#8a8886" stroke-width="1"/><rect x="0.9" y="0.9" width="30.8" height="30.6" fill="none" stroke="#3b3a39" stroke-width="1.6"/><circle cx="15.2" cy="12.7" r="9.6" fill="#fafafa" stroke="#3b3a39" stroke-width="1.3"/><rect x="9.8" y="11" width="3.2" height="6" fill="#d2d0ce" stroke="#a19f9d" stroke-width="0.6"/><rect x="13.6" y="6.6" width="3.4" height="10.4" fill="#d2d0ce" stroke="#605e5c" stroke-width="0.8"/><rect x="17.4" y="8.6" width="3.2" height="8.4" fill="#5b9bd5" stroke="#1a6fc4" stroke-width="0.8"/><path d="M22.2 19.8L32 31.4" stroke="#3b3a39" stroke-width="1.4"/></svg>
<svg class="b" style="left:1282.5px;top:70px;" width="30" height="30" viewBox="0 0 30 30"><path d="M0.6 2.8H21V29.4H0.6Z" fill="#efeeed" stroke="#c8c6c4" stroke-width="1"/><g transform="rotate(45 15 13)"><rect x="10" y="5" width="10" height="18" fill="#e9e8e7" stroke="#bdbbb9" stroke-width="1"/><rect x="11.6" y="-1" width="6.8" height="6" fill="#e9e8e7" stroke="#bdbbb9" stroke-width="1"/><rect x="12.6" y="11" width="4.8" height="9.6" fill="none" stroke="#bdbbb9" stroke-width="1"/></g></svg>
<svg class="b" style="left:1290.6px;top:127.2px;" width="5.6" height="4" viewBox="0 0 5.6 4"><path d="M0.3 0.3 L2.8 3 L5.3 0.3" fill="none" stroke="#a19f9d" stroke-width="1.2" stroke-linecap="round" stroke-linejoin="round"/></svg>
<svg class="b" style="left:1348px;top:150.6px;" width="10" height="6" viewBox="0 0 10 6"><path d="M0.5 5.4L5 0.8L9.5 5.4" fill="none" stroke="#444" stroke-width="1.2"/></svg>
<svg class="b" style="left:93.6px;top:181px;" width="7" height="4" viewBox="0 0 7 4"><path d="M0 0h7l-3.5 4z" fill="#777"/></svg>
<div class="b" style="left:120.9px;top:179.2px;width:2px;height:2px;background:#a6a6a6"></div>
<div class="b" style="left:120.9px;top:183.2px;width:2px;height:2px;background:#a6a6a6"></div>
<div class="b" style="left:120.9px;top:187.2px;width:2px;height:2px;background:#a6a6a6"></div>
<svg class="b" style="left:150.5px;top:179.5px;" width="11" height="10" viewBox="0 0 11 10"><path d="M0.6 0.4L10.4 9.6M10.4 0.4L0.6 9.6" stroke="#c4c4c4" stroke-width="1.6"/></svg>
<svg class="b" style="left:186px;top:178.5px;" width="13" height="12" viewBox="0 0 13 12"><path d="M1 6.6L4.6 10.4L12 1" fill="none" stroke="#c4c4c4" stroke-width="2.1"/></svg>
<span class="t" style="left:223.5px;top:176.5px;font-size:13.5px;font-style:italic;font-weight:700;color:#5a5a5a;font-family:'Liberation Serif',serif">f<span style="font-size:10px">x</span></span>
<svg class="b" style="left:1349px;top:181px;" width="7" height="5" viewBox="0 0 7 5"><path d="M0.5 0.6L3.5 3.8L6.5 0.6" fill="none" stroke="#666" stroke-width="1.5"/></svg>
<div class="b" style="left:25px;top:227px;width:1320px;height:299px;background:#fff"></div>
<div class="b" style="left:25px;top:207px;width:70px;height:19px;background:#d2d2d2"></div>
<div class="b" style="left:0px;top:227px;width:25px;height:20px;background:#d2d2d2"></div>
<div class="b" style="left:25px;top:247px;width:878px;height:20px;background:#d9e1f2"></div>
<div class="b" style="left:25px;top:287px;width:878px;height:20px;background:#d9e1f2"></div>
<div class="b" style="left:25px;top:327px;width:878px;height:20px;background:#d9e1f2"></div>
<div class="b" style="left:25px;top:367px;width:878px;height:20px;background:#d9e1f2"></div>
<div class="b" style="left:25px;top:407px;width:878px;height:20px;background:#d9e1f2"></div>
<div class="b" style="left:0px;top:246px;width:25px;height:1px;background:#c6c6c6"></div>
<div class="b" style="left:25px;top:246px;width:1320px;height:1px;background:#d4d4d4"></div>
<div class="b" style="left:0px;top:266px;width:25px;height:1px;background:#c6c6c6"></div>
<div class="b" style="left:25px;top:266px;width:1320px;height:1px;background:#d4d4d4"></div>
<div class="b" style="left:0px;top:286px;width:25px;height:1px;background:#c6c6c6"></div>
<div class="b" style="left:25px;top:286px;width:1320px;height:1px;background:#d4d4d4"></div>
<div class="b" style="left:0px;top:306px;width:25px;height:1px;background:#c6c6c6"></div>
<div class="b" style="left:25px;top:306px;width:1320px;height:1px;background:#d4d4d4"></div>
<div class="b" style="left:0px;top:326px;width:25px;height:1px;background:#c6c6c6"></div>
<div class="b" style="left:25px;top:326px;width:1320px;height:1px;background:#d4d4d4"></div>
<div class="b" style="left:0px;top:346px;width:25px;height:1px;background:#c6c6c6"></div>
<div class="b" style="left:25px;top:346px;width:1320px;height:1px;background:#d4d4d4"></div>
<div class="b" style="left:0px;top:366px;width:25px;height:1px;background:#c6c6c6"></div>
<div class="b" style="left:25px;top:366px;width:1320px;height:1px;background:#d4d4d4"></div>
<div class="b" style="left:0px;top:386px;width:25px;height:1px;background:#c6c6c6"></div>
<div class="b" style="left:25px;top:386px;width:1320px;height:1px;background:#d4d4d4"></div>
<div class="b" style="left:0px;top:406px;width:25px;height:1px;background:#c6c6c6"></div>
<div class="b" style="left:25px;top:406px;width:1320px;height:1px;background:#d4d4d4"></div>
<div class="b" style="left:0px;top:426px;width:25px;height:1px;background:#c6c6c6"></div>
<div class="b" style="left:25px;top:426px;width:1320px;height:1px;background:#d4d4d4"></div>
<div class="b" style="left:0px;top:446px;width:25px;height:1px;background:#c6c6c6"></div>
<div class="b" style="left:25px;top:446px;width:1320px;height:1px;background:#d4d4d4"></div>
<div class="b" style="left:0px;top:466px;width:25px;height:1px;background:#c6c6c6"></div>
<div class="b" style="left:25px;top:466px;width:1320px;height:1px;background:#d4d4d4"></div>
<div class="b" style="left:0px;top:486px;width:25px;height:1px;background:#c6c6c6"></div>
<div class="b" style="left:25px;top:486px;width:1320px;height:1px;background:#d4d4d4"></div>
<div class="b" style="left:0px;top:506px;width:25px;height:1px;background:#c6c6c6"></div>
<div class="b" style="left:25px;top:506px;width:1320px;height:1px;background:#d4d4d4"></div>
<div class="b" style="left:0px;top:526px;width:25px;height:1px;background:#c6c6c6"></div>
<div class="b" style="left:25px;top:526px;width:1320px;height:1px;background:#d4d4d4"></div>
<div class="b" style="left:94px;top:227px;width:1px;height:299px;background:#d4d4d4"></div>
<div class="b" style="left:94px;top:207px;width:1px;height:19px;background:#c0c0c0"></div>
<div class="b" style="left:196px;top:227px;width:1px;height:299px;background:#d4d4d4"></div>
<div class="b" style="left:196px;top:207px;width:1px;height:19px;background:#c0c0c0"></div>
<div class="b" style="left:452px;top:227px;width:1px;height:299px;background:#d4d4d4"></div>
<div class="b" style="left:452px;top:207px;width:1px;height:19px;background:#c0c0c0"></div>
<div class="b" style="left:584px;top:227px;width:1px;height:299px;background:#d4d4d4"></div>
<div class="b" style="left:584px;top:207px;width:1px;height:19px;background:#c0c0c0"></div>
<div class="b" style="left:712px;top:227px;width:1px;height:299px;background:#d4d4d4"></div>
<div class="b" style="left:712px;top:207px;width:1px;height:19px;background:#c0c0c0"></div>
<div class="b" style="left:902px;top:227px;width:1px;height:299px;background:#d4d4d4"></div>
<div class="b" style="left:902px;top:207px;width:1px;height:19px;background:#c0c0c0"></div>
<div class="b" style="left:966px;top:227px;width:1px;height:299px;background:#d4d4d4"></div>
<div class="b" style="left:966px;top:207px;width:1px;height:19px;background:#c0c0c0"></div>
<div class="b" style="left:1030px;top:227px;width:1px;height:299px;background:#d4d4d4"></div>
<div class="b" style="left:1030px;top:207px;width:1px;height:19px;background:#c0c0c0"></div>
<div class="b" style="left:1094px;top:227px;width:1px;height:299px;background:#d4d4d4"></div>
<div class="b" style="left:1094px;top:207px;width:1px;height:19px;background:#c0c0c0"></div>
<div class="b" style="left:1158px;top:227px;width:1px;height:299px;background:#d4d4d4"></div>
<div class="b" style="left:1158px;top:207px;width:1px;height:19px;background:#c0c0c0"></div>
<div class="b" style="left:1222px;top:227px;width:1px;height:299px;background:#d4d4d4"></div>
<div class="b" style="left:1222px;top:207px;width:1px;height:19px;background:#c0c0c0"></div>
<div class="b" style="left:1286px;top:227px;width:1px;height:299px;background:#d4d4d4"></div>
<div class="b" style="left:1286px;top:207px;width:1px;height:19px;background:#c0c0c0"></div>
<div class="b" style="left:25px;top:226px;width:1320px;height:1px;background:#9b9b9b"></div>
<div class="b" style="left:25px;top:227px;width:1px;height:299px;background:#9b9b9b"></div>
<div class="b" style="left:1344px;top:226px;width:1px;height:300px;background:#a0a0a0"></div>
<svg class="b" style="left:10px;top:212px;" width="12" height="11" viewBox="0 0 12 11"><path d="M12 0V11H0z" fill="#b7b7b7"/></svg>
<div class="b" style="left:25px;top:246px;width:878px;height:1px;background:#4472c4"></div>
<div class="b" style="left:25px;top:266px;width:878px;height:1px;background:#4472c4"></div>
<div class="b" style="left:25px;top:286px;width:878px;height:1px;background:#4472c4"></div>
<div class="b" style="left:25px;top:306px;width:878px;height:1px;background:#4472c4"></div>
<div class="b" style="left:25px;top:326px;width:878px;height:1px;background:#4472c4"></div>
<div class="b" style="left:25px;top:346px;width:878px;height:1px;background:#4472c4"></div>
<div class="b" style="left:25px;top:366px;width:878px;height:1px;background:#4472c4"></div>
<div class="b" style="left:25px;top:386px;width:878px;height:1px;background:#4472c4"></div>
<div class="b" style="left:25px;top:406px;width:878px;height:1px;background:#4472c4"></div>
<div class="b" style="left:25px;top:426px;width:878px;height:1px;background:#4472c4"></div>
<div class="b" style="left:25px;top:245px;width:878px;height:2px;background:#4472c4"></div>
<div class="b" style="left:94px;top:227px;width:1px;height:200px;background:#4472c4"></div>
<div class="b" style="left:196px;top:227px;width:1px;height:200px;background:#4472c4"></div>
<div class="b" style="left:452px;top:227px;width:1px;height:200px;background:#4472c4"></div>
<div class="b" style="left:584px;top:227px;width:1px;height:200px;background:#4472c4"></div>
<div class="b" style="left:712px;top:227px;width:1px;height:200px;background:#4472c4"></div>
<div class="b" style="left:902px;top:227px;width:1px;height:200px;background:#4472c4"></div>
<span class="t" style="left:56.10px;top:210.90px;font-size:13px;color:#217346;transform:scaleX(0.9000);-webkit-text-stroke:0.2px #217346;">A</span>
<span class="t" style="left:142.10px;top:210.90px;font-size:13px;color:#1a1a1a;transform:scaleX(0.9000);-webkit-text-stroke:0.2px #1a1a1a;">B</span>
<span class="t" style="left:320.78px;top:210.90px;font-size:13px;color:#1a1a1a;transform:scaleX(0.9000);-webkit-text-stroke:0.2px #1a1a1a;">C</span>
<span class="t" style="left:514.78px;top:210.90px;font-size:13px;color:#1a1a1a;transform:scaleX(0.9000);-webkit-text-stroke:0.2px #1a1a1a;">D</span>
<span class="t" style="left:645.10px;top:210.90px;font-size:13px;color:#1a1a1a;transform:scaleX(0.9000);-webkit-text-stroke:0.2px #1a1a1a;">E</span>
<span class="t" style="left:804.43px;top:210.90px;font-size:13px;color:#1a1a1a;transform:scaleX(0.9000);-webkit-text-stroke:0.2px #1a1a1a;">F</span>
<span class="t" style="left:930.45px;top:210.90px;font-size:13px;color:#1a1a1a;transform:scaleX(0.9000);-webkit-text-stroke:0.2px #1a1a1a;">G</span>
<span class="t" style="left:994.78px;top:210.90px;font-size:13px;color:#1a1a1a;transform:scaleX(0.9000);-webkit-text-stroke:0.2px #1a1a1a;">H</span>
<span class="t" style="left:1061.37px;top:210.90px;font-size:13px;color:#1a1a1a;transform:scaleX(0.9000);-webkit-text-stroke:0.2px #1a1a1a;">I</span>
<span class="t" style="left:1124.08px;top:210.90px;font-size:13px;color:#1a1a1a;transform:scaleX(0.9000);-webkit-text-stroke:0.2px #1a1a1a;">J</span>
<span class="t" style="left:1187.10px;top:210.90px;font-size:13px;color:#1a1a1a;transform:scaleX(0.9000);-webkit-text-stroke:0.2px #1a1a1a;">K</span>
<span class="t" style="left:1251.75px;top:210.90px;font-size:13px;color:#1a1a1a;transform:scaleX(0.9000);-webkit-text-stroke:0.2px #1a1a1a;">L</span>
<span class="t" style="left:1314.13px;top:210.90px;font-size:13px;color:#1a1a1a;transform:scaleX(0.9000);-webkit-text-stroke:0.2px #1a1a1a;">M</span>
<span class="t" style="left:9.19px;top:230.90px;font-size:13px;color:#217346;transform:scaleX(0.9700);-webkit-text-stroke:0.2px #217346;">1</span>
<span class="t" style="left:9.19px;top:250.90px;font-size:13px;color:#1a1a1a;transform:scaleX(0.9700);-webkit-text-stroke:0.2px #1a1a1a;">2</span>
<span class="t" style="left:9.19px;top:270.90px;font-size:13px;color:#1a1a1a;transform:scaleX(0.9700);-webkit-text-stroke:0.2px #1a1a1a;">3</span>
<span class="t" style="left:9.19px;top:290.90px;font-size:13px;color:#1a1a1a;transform:scaleX(0.9700);-webkit-text-stroke:0.2px #1a1a1a;">4</span>
<span class="t" style="left:9.19px;top:310.90px;font-size:13px;color:#1a1a1a;transform:scaleX(0.9700);-webkit-text-stroke:0.2px #1a1a1a;">5</span>
<span class="t" style="left:9.19px;top:330.90px;font-size:13px;color:#1a1a1a;transform:scaleX(0.9700);-webkit-text-stroke:0.2px #1a1a1a;">6</span>
<span class="t" style="left:9.19px;top:350.90px;font-size:13px;color:#1a1a1a;transform:scaleX(0.9700);-webkit-text-stroke:0.2px #1a1a1a;">7</span>
<span class="t" style="left:9.19px;top:370.90px;font-size:13px;color:#1a1a1a;transform:scaleX(0.9700);-webkit-text-stroke:0.2px #1a1a1a;">8</span>
<span class="t" style="left:9.19px;top:390.90px;font-size:13px;color:#1a1a1a;transform:scaleX(0.9700);-webkit-text-stroke:0.2px #1a1a1a;">9</span>
<span class="t" style="left:5.69px;top:410.90px;font-size:13px;color:#1a1a1a;transform:scaleX(0.9700);-webkit-text-stroke:0.2px #1a1a1a;">10</span>
<span class="t" style="left:6.15px;top:430.90px;font-size:13px;color:#1a1a1a;transform:scaleX(0.9700);-webkit-text-stroke:0.2px #1a1a1a;">11</span>
<span class="t" style="left:5.69px;top:450.90px;font-size:13px;color:#1a1a1a;transform:scaleX(0.9700);-webkit-text-stroke:0.2px #1a1a1a;">12</span>
<span class="t" style="left:5.69px;top:470.90px;font-size:13px;color:#1a1a1a;transform:scaleX(0.9700);-webkit-text-stroke:0.2px #1a1a1a;">13</span>
<span class="t" style="left:5.69px;top:490.90px;font-size:13px;color:#1a1a1a;transform:scaleX(0.9700);-webkit-text-stroke:0.2px #1a1a1a;">14</span>
<span class="t" style="left:5.69px;top:510.90px;font-size:13px;color:#1a1a1a;transform:scaleX(0.9700);-webkit-text-stroke:0.2px #1a1a1a;">15</span>
<span class="t" style="left:27.81px;top:230.90px;font-size:13px;color:#000;font-weight:700;transform:scaleX(0.9784);">Issue Id</span>
<span class="t" style="left:96.60px;top:230.90px;font-size:13px;color:#000;font-weight:700;transform:scaleX(0.9877);">Issue Type</span>
<span class="t" style="left:198.11px;top:230.90px;font-size:13px;color:#000;font-weight:700;transform:scaleX(0.9781);">Issue</span>
<span class="t" style="left:454.01px;top:230.90px;font-size:13px;color:#000;font-weight:700;transform:scaleX(0.9738);">Failed checks</span>
<span class="t" style="left:586.78px;top:230.90px;font-size:13px;color:#000;font-weight:700;transform:scaleX(0.9652);">Total checks</span>
<span class="t" style="left:714.61px;top:230.90px;font-size:13px;color:#000;font-weight:700;transform:scaleX(0.9886);">Changed from last audit</span>
<div class="b" style="left:77px;top:228px;width:17px;height:17px;background:linear-gradient(#fff,#f0f0f0);border:1px solid #ababab"></div>
<svg class="b" style="left:82px;top:235px;" width="7" height="4" viewBox="0 0 7 4"><path d="M0 0h7l-3.5 4z" fill="#666"/></svg>
<div class="b" style="left:179px;top:228px;width:17px;height:17px;background:linear-gradient(#fff,#f0f0f0);border:1px solid #ababab"></div>
<svg class="b" style="left:184px;top:235px;" width="7" height="4" viewBox="0 0 7 4"><path d="M0 0h7l-3.5 4z" fill="#666"/></svg>
<div class="b" style="left:435px;top:228px;width:17px;height:17px;background:linear-gradient(#fff,#f0f0f0);border:1px solid #ababab"></div>
<svg class="b" style="left:440px;top:235px;" width="7" height="4" viewBox="0 0 7 4"><path d="M0 0h7l-3.5 4z" fill="#666"/></svg>
<div class="b" style="left:567px;top:228px;width:17px;height:17px;background:linear-gradient(#fff,#f0f0f0);border:1px solid #ababab"></div>
<svg class="b" style="left:572px;top:235px;" width="7" height="4" viewBox="0 0 7 4"><path d="M0 0h7l-3.5 4z" fill="#666"/></svg>
<div class="b" style="left:695px;top:228px;width:17px;height:17px;background:linear-gradient(#fff,#f0f0f0);border:1px solid #ababab"></div>
<svg class="b" style="left:700px;top:235px;" width="7" height="4" viewBox="0 0 7 4"><path d="M0 0h7l-3.5 4z" fill="#666"/></svg>
<div class="b" style="left:885px;top:228px;width:17px;height:17px;background:linear-gradient(#fff,#f0f0f0);border:1px solid #ababab"></div>
<svg class="b" style="left:890px;top:235px;" width="7" height="4" viewBox="0 0 7 4"><path d="M0 0h7l-3.5 4z" fill="#666"/></svg>
<span class="t" style="left:85.17px;top:250.90px;font-size:13px;color:#000;transform:scaleX(0.9700);-webkit-text-stroke:0.3px #000;">1</span>
<span class="t" style="left:97.26px;top:250.90px;font-size:13px;color:#000;transform:scaleX(0.8828);-webkit-text-stroke:0.3px #000;">ERROR</span>
<span class="t" style="left:198.97px;top:250.90px;font-size:13px;color:#000;transform:scaleX(1.0567);-webkit-text-stroke:0.3px #000;">5xx errors</span>
<span class="t" style="left:575.05px;top:250.90px;font-size:13px;color:#000;transform:scaleX(0.9700);-webkit-text-stroke:0.3px #000;">0</span>
<span class="t" style="left:689.05px;top:250.90px;font-size:13px;color:#000;transform:scaleX(0.9700);-webkit-text-stroke:0.3px #000;">200</span>
<span class="t" style="left:893.05px;top:250.90px;font-size:13px;color:#000;transform:scaleX(0.9700);-webkit-text-stroke:0.3px #000;">0</span>
<span class="t" style="left:85.17px;top:270.90px;font-size:13px;color:#000;transform:scaleX(0.9700);-webkit-text-stroke:0.3px #000;">2</span>
<span class="t" style="left:97.26px;top:270.90px;font-size:13px;color:#000;transform:scaleX(0.8828);-webkit-text-stroke:0.3px #000;">ERROR</span>
<span class="t" style="left:199.24px;top:270.90px;font-size:13px;color:#000;transform:scaleX(1.0521);-webkit-text-stroke:0.3px #000;">4xx errors</span>
<span class="t" style="left:575.05px;top:270.90px;font-size:13px;color:#000;transform:scaleX(0.9700);-webkit-text-stroke:0.3px #000;">0</span>
<span class="t" style="left:689.05px;top:270.90px;font-size:13px;color:#000;transform:scaleX(0.9700);-webkit-text-stroke:0.3px #000;">200</span>
<span class="t" style="left:893.05px;top:270.90px;font-size:13px;color:#000;transform:scaleX(0.9700);-webkit-text-stroke:0.3px #000;">0</span>
<span class="t" style="left:85.11px;top:290.90px;font-size:13px;color:#000;transform:scaleX(0.9700);-webkit-text-stroke:0.3px #000;">3</span>
<span class="t" style="left:97.26px;top:290.90px;font-size:13px;color:#000;transform:scaleX(0.8828);-webkit-text-stroke:0.3px #000;">ERROR</span>
<span class="t" style="left:199.23px;top:290.90px;font-size:13px;color:#000;transform:scaleX(1.0669);-webkit-text-stroke:0.3px #000;">Title tag is missing or empty</span>
<span class="t" style="left:575.05px;top:290.90px;font-size:13px;color:#000;transform:scaleX(0.9700);-webkit-text-stroke:0.3px #000;">0</span>
<span class="t" style="left:689.17px;top:290.90px;font-size:13px;color:#000;transform:scaleX(0.9700);-webkit-text-stroke:0.3px #000;">159</span>
<span class="t" style="left:893.05px;top:290.90px;font-size:13px;color:#000;transform:scaleX(0.9700);-webkit-text-stroke:0.3px #000;">0</span>
<span class="t" style="left:84.93px;top:310.90px;font-size:13px;color:#000;transform:scaleX(0.9700);-webkit-text-stroke:0.3px #000;">4</span>
<span class="t" style="left:97.18px;top:310.90px;font-size:13px;color:#000;transform:scaleX(0.9558);-webkit-text-stroke:0.3px #000;">NOTICE</span>
<span class="t" style="left:198.34px;top:310.90px;font-size:13px;color:#000;transform:scaleX(1.0893);-webkit-text-stroke:0.3px #000;">Blocked from crawling</span>
<span class="t" style="left:575.05px;top:310.90px;font-size:13px;color:#000;transform:scaleX(0.9700);-webkit-text-stroke:0.3px #000;">0</span>
<span class="t" style="left:689.17px;top:310.90px;font-size:13px;color:#000;transform:scaleX(0.9700);-webkit-text-stroke:0.3px #000;">159</span>
<span class="t" style="left:893.05px;top:310.90px;font-size:13px;color:#000;transform:scaleX(0.9700);-webkit-text-stroke:0.3px #000;">0</span>
<span class="t" style="left:85.11px;top:330.90px;font-size:13px;color:#000;transform:scaleX(0.9700);-webkit-text-stroke:0.3px #000;">6</span>
<span class="t" style="left:97.26px;top:330.90px;font-size:13px;color:#000;transform:scaleX(0.8828);-webkit-text-stroke:0.3px #000;">ERROR</span>
<span class="t" style="left:198.31px;top:330.90px;font-size:13px;color:#000;transform:scaleX(1.1188);-webkit-text-stroke:0.3px #000;">Duplicate title tag</span>
<span class="t" style="left:575.05px;top:330.90px;font-size:13px;color:#000;transform:scaleX(0.9700);-webkit-text-stroke:0.3px #000;">0</span>
<span class="t" style="left:675.04px;top:330.90px;font-size:13px;color:#000;transform:scaleX(0.9700);-webkit-text-stroke:0.3px #000;">29316</span>
<span class="t" style="left:893.05px;top:330.90px;font-size:13px;color:#000;transform:scaleX(0.9700);-webkit-text-stroke:0.3px #000;">0</span>
<span class="t" style="left:85.17px;top:350.90px;font-size:13px;color:#000;transform:scaleX(0.9700);-webkit-text-stroke:0.3px #000;">7</span>
<span class="t" style="left:97.26px;top:350.90px;font-size:13px;color:#000;transform:scaleX(0.8828);-webkit-text-stroke:0.3px #000;">ERROR</span>
<span class="t" style="left:198.33px;top:350.90px;font-size:13px;color:#000;transform:scaleX(1.1019);-webkit-text-stroke:0.3px #000;">Duplicate content</span>
<span class="t" style="left:575.05px;top:350.90px;font-size:13px;color:#000;transform:scaleX(0.9700);-webkit-text-stroke:0.3px #000;">0</span>
<span class="t" style="left:703.05px;top:350.90px;font-size:13px;color:#000;transform:scaleX(0.9700);-webkit-text-stroke:0.3px #000;">0</span>
<span class="t" style="left:893.05px;top:350.90px;font-size:13px;color:#000;transform:scaleX(0.9700);-webkit-text-stroke:0.3px #000;">0</span>
<span class="t" style="left:85.11px;top:370.90px;font-size:13px;color:#000;transform:scaleX(0.9700);-webkit-text-stroke:0.3px #000;">8</span>
<span class="t" style="left:97.26px;top:370.90px;font-size:13px;color:#000;transform:scaleX(0.8828);-webkit-text-stroke:0.3px #000;">ERROR</span>
<span class="t" style="left:198.33px;top:370.90px;font-size:13px;color:#000;transform:scaleX(1.0998);-webkit-text-stroke:0.3px #000;">Broken internal links</span>
<span class="t" style="left:575.05px;top:370.90px;font-size:13px;color:#000;transform:scaleX(0.9700);-webkit-text-stroke:0.3px #000;">0</span>
<span class="t" style="left:682.14px;top:370.90px;font-size:13px;color:#000;transform:scaleX(0.9700);-webkit-text-stroke:0.3px #000;">3892</span>
<span class="t" style="left:893.05px;top:370.90px;font-size:13px;color:#000;transform:scaleX(0.9700);-webkit-text-stroke:0.3px #000;">0</span>
<span class="t" style="left:85.17px;top:390.90px;font-size:13px;color:#000;transform:scaleX(0.9700);-webkit-text-stroke:0.3px #000;">9</span>
<span class="t" style="left:97.26px;top:390.90px;font-size:13px;color:#000;transform:scaleX(0.8828);-webkit-text-stroke:0.3px #000;">ERROR</span>
<span class="t" style="left:198.38px;top:390.90px;font-size:13px;color:#000;transform:scaleX(1.0549);-webkit-text-stroke:0.3px #000;">Pages not crawled</span>
<span class="t" style="left:575.11px;top:390.90px;font-size:13px;color:#000;transform:scaleX(0.9700);-webkit-text-stroke:0.3px #000;">3</span>
<span class="t" style="left:689.05px;top:390.90px;font-size:13px;color:#000;transform:scaleX(0.9700);-webkit-text-stroke:0.3px #000;">200</span>
<span class="t" style="left:893.05px;top:390.90px;font-size:13px;color:#000;transform:scaleX(0.9700);-webkit-text-stroke:0.3px #000;">0</span>
<span class="t" style="left:78.02px;top:410.90px;font-size:13px;color:#000;transform:scaleX(0.9700);-webkit-text-stroke:0.3px #000;">10</span>
<span class="t" style="left:97.26px;top:410.90px;font-size:13px;color:#000;transform:scaleX(0.8828);-webkit-text-stroke:0.3px #000;">ERROR</span>
<span class="t" style="left:198.37px;top:410.90px;font-size:13px;color:#000;transform:scaleX(1.0608);-webkit-text-stroke:0.3px #000;">DNS resolution issue</span>
<span class="t" style="left:575.05px;top:410.90px;font-size:13px;color:#000;transform:scaleX(0.9700);-webkit-text-stroke:0.3px #000;">0</span>
<span class="t" style="left:689.05px;top:410.90px;font-size:13px;color:#000;transform:scaleX(0.9700);-webkit-text-stroke:0.3px #000;">200</span>
<span class="t" style="left:893.05px;top:410.90px;font-size:13px;color:#000;transform:scaleX(0.9700);-webkit-text-stroke:0.3px #000;">0</span>
<svg class="b" style="left:898px;top:422px;" width="4" height="4" viewBox="0 0 4 4"><path d="M4 0V4H0Z" fill="#2f5597"/></svg>
<div class="b" style="left:24px;top:225px;width:72px;height:22px;border:2px solid #217346"></div>
<div class="b" style="left:92px;top:244px;width:5px;height:5px;background:#217346;border:0;outline:1px solid #fff"></div>
<div class="b" style="left:1348px;top:209px;width:15px;height:15px;background:#fff;border:1px solid #7a7a7a"></div>
<svg class="b" style="left:1351.5px;top:214px;" width="8" height="4" viewBox="0 0 8 4"><path d="M0 4h8l-4-4z" fill="#7a7a7a"/></svg>
<div class="b" style="left:1348px;top:224px;width:15px;height:310px;background:#fff;border:1px solid #7a7a7a"></div>
<svg class="b" style="left:0;top:0" width="1366" height="526" viewBox="0 0 1366 526" fill="none" stroke="#0b47e0" stroke-width="5.6" stroke-linecap="round" stroke-linejoin="round"><path d="M904 156 L 924.3 180 Q 961 221.5 1000.5 264 L 1020 287"/><path d="M942.5 157.7 C 928 157.5, 915 155, 903 153.5 C 900 160, 902 180, 906 187.5"/></svg>
</body></html>
